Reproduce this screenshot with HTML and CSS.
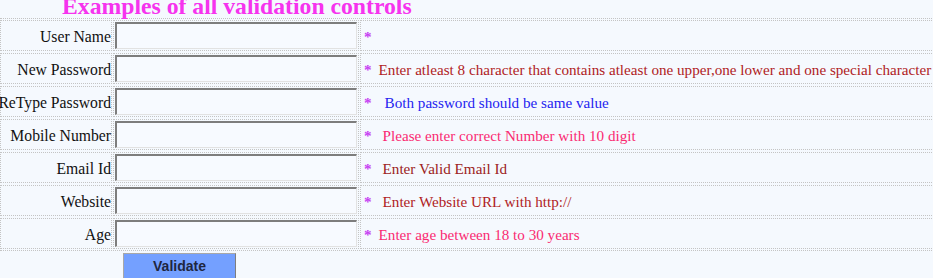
FILE: index.html
```html
<!DOCTYPE html>
<html>
<head>
<meta charset="utf-8">
<link rel="stylesheet" href="styles.css">
</head>
<body>
<div class="title">Examples of all validation controls</div>
<div class="form">
  <div class="cell label">User Name</div>
  <div class="cell field"><input class="box" type="text"></div>
  <div class="cell msg"><span class="star">*</span></div>

  <div class="cell label">New Password</div>
  <div class="cell field"><input class="box" type="text"></div>
  <div class="cell msg"><span class="star">*</span><span class="text red gap-s">Enter atleast 8 character that contains atleast one upper,one lower and one special character</span></div>

  <div class="cell label">ReType Password</div>
  <div class="cell field"><input class="box" type="text"></div>
  <div class="cell msg"><span class="star">*</span><span class="text blue gap-l">Both password should be same value</span></div>

  <div class="cell label">Mobile Number</div>
  <div class="cell field"><input class="box" type="text"></div>
  <div class="cell msg"><span class="star">*</span><span class="text pink gap-m">Please enter correct Number with 10 digit</span></div>

  <div class="cell label">Email Id</div>
  <div class="cell field"><input class="box" type="text"></div>
  <div class="cell msg"><span class="star">*</span><span class="text brown gap-m">Enter Valid Email Id</span></div>

  <div class="cell label">Website</div>
  <div class="cell field"><input class="box" type="text"></div>
  <div class="cell msg"><span class="star">*</span><span class="text red gap-m">Enter Website URL with http://</span></div>

  <div class="cell label">Age</div>
  <div class="cell field"><input class="box" type="text"></div>
  <div class="cell msg"><span class="star">*</span><span class="text pink gap-s">Enter age between 18 to 30 years</span></div>
</div>
<button class="validate" type="button">Validate</button>
</body>
</html>
```
FILE: styles.css
```css
html, body {
  margin: 0;
  padding: 0;
  overflow: hidden;
  background: #f5f9fe;
}
body {
  font-family: "Liberation Serif", "Times New Roman", serif;
  color: #111;
}
.title {
  margin-top: -6px;
  height: 24px;
  line-height: 24px;
  padding-left: 62px;
  font-size: 23.7px;
  font-weight: 700;
  color: #f633ee;
  white-space: nowrap;
}
.form {
  display: grid;
  grid-template-columns: 112px 246px minmax(620px, max-content);
  column-gap: 1px;
  row-gap: 2px;
  border-top: 1px dotted #c4c4c4;
  border-bottom: 1px dotted #c4c4c4;
  padding: 1px 0;
  width: max-content;
}
.cell {
  border: 1px dotted #c4c4c4;
  padding: 1px;
  display: flex;
  align-items: center;
  white-space: nowrap;
}
.label {
  justify-content: flex-end;
  font-size: 15.7px;
  padding-top: 4px;
  padding-right: 0;
}
.field {
  padding: 1px;
}
.box {
  box-sizing: border-box;
  width: 242px;
  height: 27px;
  margin: 0;
  padding: 0;
  background: #f7faff;
  border-style: solid;
  border-width: 2px 1px 1px 2px;
  border-color: #7d7d7d #e2e2e2 #e2e2e2 #7d7d7d;
  outline: none;
}
.msg {
  padding-left: 3px;
  padding-top: 4px;
  font-size: 15.15px;
}
.star {
  color: #c640f2;
  font-weight: 700;
}
.text.gap-s { margin-left: 7px; }
.text.gap-m { margin-left: 11px; }
.text.gap-l { margin-left: 13px; }
.red { color: #b01c24; }
.blue { color: #2424f0; }
.pink { color: #fa2a72; }
.brown { color: #9c2222; }
.validate {
  display: block;
  margin: 2px 0 0 123px;
  width: 113px;
  height: 26px;
  padding: 0;
  background: #74a0ff;
  border: 1px solid #a8a8a8;
  border-right-color: #7e7e7e;
  border-bottom-color: #7e7e7e;
  font-family: "Liberation Sans", Arial, sans-serif;
  font-weight: 700;
  font-size: 14px;
  color: #1e2640;
}
```
